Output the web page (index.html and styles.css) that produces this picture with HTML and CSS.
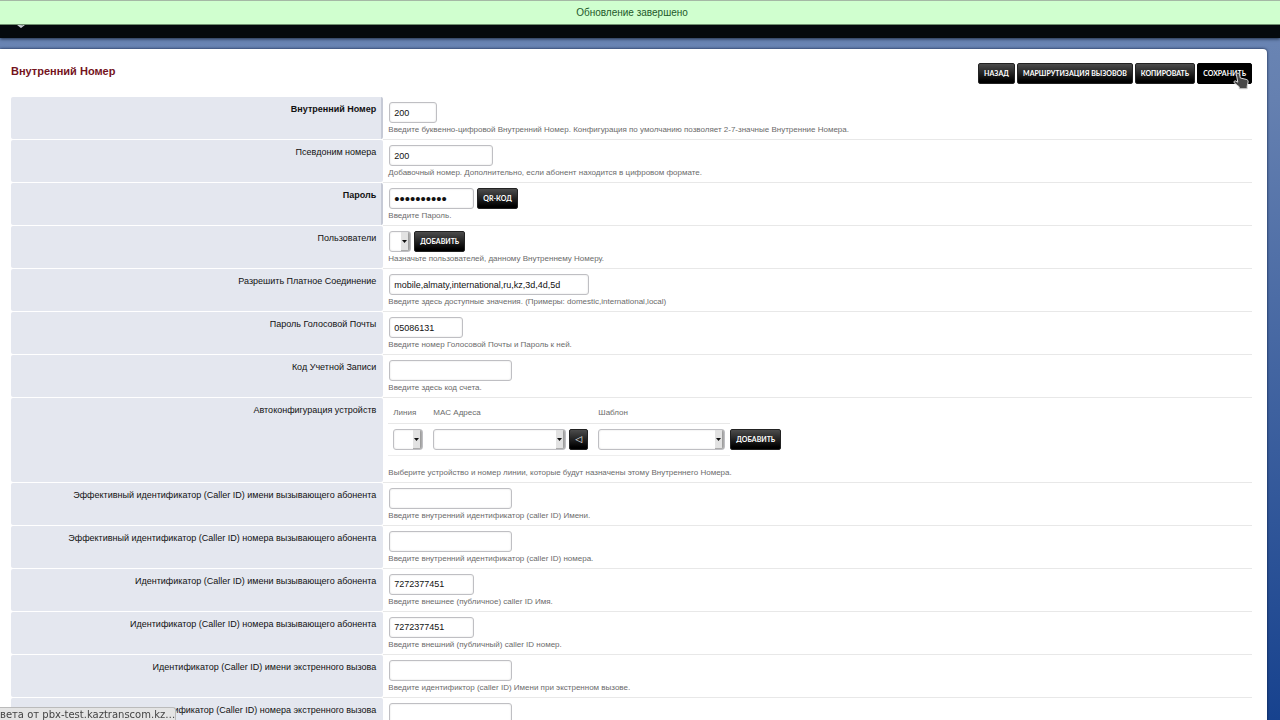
FILE: index.html
```
<!DOCTYPE html>
<html lang="ru">
<head>
    <meta charset="UTF-8">
    <meta name="viewport" content="width=device-width, initial-scale=1.0">
    <title>Внутренний Номер</title>
    <link rel="stylesheet" href="styles.css">
</head>
<body>
    <div class="message" role="status">Обновление завершено</div>

    <header class="menu-bar">
        <svg class="menu-logo" viewBox="0 0 10 10" width="10" height="10" aria-hidden="true">
            <path d="M1.500 6.500L5 9.200L8.500 6.500M4 5v3h2" fill="none" stroke="#c8ced4" stroke-width="1.4"/>
        </svg>
    </header>

    <main class="main-content">
        <form onsubmit="return false">
            <div class="action-bar">
                <h1>Внутренний Номер</h1>
                <div class="actions">
                    <button type="button" class="btn">Назад</button>
                    <button type="button" class="btn">Маршрутизация вызовов</button>
                    <button type="button" class="btn">Копировать</button>
                    <button type="submit" class="btn btn-hover">Сохранить
                        <svg class="pointer" viewBox="0 0 16 18" width="16" height="18" aria-hidden="true">
                            <path d="M3.4 2.4C3.6 0.8 6 0.6 6.500 2.200L7.300 6L13.2 7.4C14.6 7.7 15.3 8.600 15.1 10L14.2 14.2V16.8H6.2V14.8L1.200 10.800C0.400 9.600 1.600 8.400 2.800 9L4.800 10.200Z" fill="#484848" stroke="#d8d8d8" stroke-width="1"/>
                        </svg>
                    </button>
                </div>
            </div>

            <div class="row required">
                <label for="extension">Внутренний Номер</label>
                <div class="value">
                    <div class="controls"><input type="text" id="extension" class="w-number" value="200"></div>
                    <p>Введите буквенно-цифровой Внутренний Номер. Конфигурация по умолчанию позволяет 2-7-значные Внутренние Номера.</p>
                </div>
            </div>
            <div class="row">
                <label for="alias">Псевдоним номера</label>
                <div class="value">
                    <div class="controls"><input type="text" id="alias" class="w-alias" value="200"></div>
                    <p>Добавочный номер. Дополнительно, если абонент находится в цифровом формате.</p>
                </div>
            </div>
            <div class="row required">
                <label for="password">Пароль</label>
                <div class="value">
                    <div class="controls">
                        <input type="password" id="password" class="w-medium" value="aaaaaaaaaa">
                        <button type="button" class="btn">QR-код</button>
                    </div>
                    <p>Введите Пароль.</p>
                </div>
            </div>
            <div class="row">
                <label for="users">Пользователи</label>
                <div class="value">
                    <div class="controls">
                        <select id="users" class="w-user"><option></option></select>
                        <button type="button" class="btn">Добавить</button>
                    </div>
                    <p>Назначьте пользователей, данному Внутреннему Номеру.</p>
                </div>
            </div>
            <div class="row">
                <label for="toll">Разрешить Платное Соединение</label>
                <div class="value">
                    <div class="controls"><input type="text" id="toll" class="w-wide" value="mobile,almaty,international,ru,kz,3d,4d,5d"></div>
                    <p>Введите здесь доступные значения. (Примеры: domestic,international,local)</p>
                </div>
            </div>
            <div class="row">
                <label for="voicemail">Пароль Голосовой Почты</label>
                <div class="value">
                    <div class="controls"><input type="text" id="voicemail" class="w-voicemail" value="05086131"></div>
                    <p>Введите номер Голосовой Почты и Пароль к ней.</p>
                </div>
            </div>
            <div class="row">
                <label for="account">Код Учетной Записи</label>
                <div class="value">
                    <div class="controls"><input type="text" id="account"></div>
                    <p>Введите здесь код счета.</p>
                </div>
            </div>
            <div class="row">
                <label for="line">Автоконфигурация устройств</label>
                <div class="value">
                    <div class="devices">
                        <table>
                            <thead>
                                <tr>
                                    <th>Линия</th>
                                    <th>MAC Адреса</th>
                                    <th>Шаблон</th>
                                </tr>
                            </thead>
                            <tbody>
                                <tr>
                                    <td><select id="line" class="w-line"><option></option></select></td>
                                    <td>
                                        <div class="mac">
                                            <select class="w-mac" aria-label="MAC Адреса"><option></option></select>
                                            <button type="button" class="btn btn-icon">◁</button>
                                        </div>
                                    </td>
                                    <td><select class="w-template" aria-label="Шаблон"><option></option></select></td>
                                </tr>
                            </tbody>
                        </table>
                        <button type="button" class="btn">Добавить</button>
                    </div>
                    <p>Выберите устройство и номер линии, которые будут назначены этому Внутреннего Номера.</p>
                </div>
            </div>
            <div class="row">
                <label for="eff-name">Эффективный идентификатор (Caller ID) имени вызывающего абонента</label>
                <div class="value">
                    <div class="controls"><input type="text" id="eff-name"></div>
                    <p>Введите внутренний идентификатор (caller ID) Имени.</p>
                </div>
            </div>
            <div class="row">
                <label for="eff-number">Эффективный идентификатор (Caller ID) номера вызывающего абонента</label>
                <div class="value">
                    <div class="controls"><input type="text" id="eff-number"></div>
                    <p>Введите внутренний идентификатор (caller ID) номера.</p>
                </div>
            </div>
            <div class="row">
                <label for="out-name">Идентификатор (Caller ID) имени вызывающего абонента</label>
                <div class="value">
                    <div class="controls"><input type="text" id="out-name" class="w-medium" value="7272377451"></div>
                    <p>Введите внешнее (публичное) caller ID Имя.</p>
                </div>
            </div>
            <div class="row">
                <label for="out-number">Идентификатор (Caller ID) номера вызывающего абонента</label>
                <div class="value">
                    <div class="controls"><input type="text" id="out-number" class="w-medium" value="7272377451"></div>
                    <p>Введите внешний (публичный) caller ID номер.</p>
                </div>
            </div>
            <div class="row">
                <label for="em-name">Идентификатор (Caller ID) имени экстренного вызова</label>
                <div class="value">
                    <div class="controls"><input type="text" id="em-name"></div>
                    <p>Введите идентификтор (caller ID) Имени при экстренном вызове.</p>
                </div>
            </div>
            <div class="row">
                <label for="em-number">Идентификатор (Caller ID) номера экстренного вызова</label>
                <div class="value">
                    <div class="controls"><input type="text" id="em-number"></div>
                </div>
            </div>
        </form>
    </main>

    <div class="browser-status">вета от pbx-test.kaztranscom.kz…</div>
</body>
</html>
```
FILE: styles.css
```
* {
    margin: 0;
    padding: 0;
    box-sizing: border-box;
}

html {
    scrollbar-width: none;
}

body {
    font-family: "Liberation Sans", Arial, sans-serif;
    font-size: 9px;
    color: #111;
    min-height: 100vh;
    background: linear-gradient(to bottom, #6c87b5 0, #6580b0 100px, #17428e 720px) fixed;
}

.message {
    position: absolute;
    top: 0;
    left: 0;
    right: 0;
    z-index: 2;
    height: 25px;
    padding-right: 16px;
    border-top: 1px solid #a5b8a5;
    border-bottom: 1px solid #6f8f70;
    background: #d0ffcf;
    color: #23592a;
    font-size: 10px;
    line-height: 24px;
    text-align: center;
}

.menu-bar {
    height: 38px;
    padding: 18px 16px 0;
    background: #05090d;
    box-shadow: 0 1px 3px #1d2c46;
}

.menu-logo {
    display: block;
}

.main-content {
    margin: 11px 13px 0 0;
    padding: 14px 15px 15px 11px;
    background: #fff;
    border-radius: 0 4px 4px 0;
    box-shadow: 0 0 3px #0a1a3c;
}

.action-bar {
    display: flex;
    justify-content: space-between;
    height: 34px;
}

h1 {
    font-size: 11px;
    line-height: 17px;
    color: #74131d;
}

.actions {
    display: flex;
    gap: 2px;
}

.btn {
    position: relative;
    height: 21px;
    padding: 0 5px;
    border: 1px solid #222;
    border-radius: 2px;
    background: linear-gradient(to bottom, #4c4c4c, #000 90%);
    color: #fff;
    font-family: Lato, sans-serif;
    font-size: 7px;
    font-weight: bold;
    line-height: 19px;
    text-transform: uppercase;
    white-space: nowrap;
}

.btn-hover {
    background: #000;
    border-color: #000;
}

.pointer {
    position: absolute;
    right: 2px;
    bottom: -7px;
}

.btn-icon {
    width: 19px;
    padding: 0;
    font-family: "DejaVu Sans", sans-serif;
    font-size: 9px;
    font-weight: normal;
}

.row {
    display: grid;
    grid-template-columns: 30% 1fr;
    min-height: 43px;
}

.row > label {
    margin-bottom: 1px;
    padding: 6px 7px 0 0;
    border-radius: 2px;
    background: #e4e7ef;
    line-height: 12px;
    text-align: right;
}

.required > label {
    padding-right: 5px;
    border-right: 2px solid #c6cad6;
    font-weight: bold;
}

.value {
    padding: 5px 0 0 5px;
    border-bottom: 1px solid #e8e8e8;
}

.controls {
    display: flex;
    gap: 3px;
    padding-left: 1px;
}

.value p {
    color: #6b6b6b;
    font-size: 8px;
    line-height: 13px;
}

input,
select {
    width: 123px;
    height: 21px;
    padding: 0 4px;
    border: 1px solid #bfbfc3;
    border-radius: 3px;
    background: #fff;
    box-shadow: inset 0 0 2px #ddd;
    color: #111;
    font-family: inherit;
    font-size: 9px;
}

input[type="password"] {
    font-size: 15px;
}

select {
    appearance: none;
    background: url("data:image/svg+xml,%3Csvg xmlns='http://www.w3.org/2000/svg' width='9' height='19'%3E%3Cpath d='M0 0h9v19H0z' fill='%23e2e2e2'/%3E%3Cpath d='M7 0h2v19H0v-1h7z' fill='%239a9a9a'/%3E%3Cpath d='M1 8h5L3.500 11z' fill='%23111'/%3E%3C/svg%3E") right top no-repeat #fff;
}

.w-number { width: 48px; }
.w-alias { width: 104px; }
.w-medium { width: 85px; }
.w-wide { width: 200px; }
.w-voicemail { width: 74px; }
.w-user { width: 22px; }
.w-line { width: 30px; }
.w-mac { width: 133px; }
.w-template { width: 127px; }

.devices {
    display: flex;
    align-items: flex-end;
    padding-bottom: 10px;
}

.devices > .btn {
    margin-bottom: 6px;
}

.devices + p {
    padding-bottom: 3px;
}

table {
    border-collapse: collapse;
}

th {
    height: 20px;
    padding: 0 5px;
    border-bottom: 1px solid #e8e8e8;
    color: #6b6b6b;
    font-size: 8px;
    font-weight: normal;
    text-align: left;
}

td {
    height: 32px;
    padding: 0 5px;
    border-bottom: 1px solid #eee;
}

td select {
    display: block;
}

.mac {
    display: flex;
    gap: 3px;
}

.browser-status {
    position: fixed;
    left: 0;
    bottom: 0;
    height: 13px;
    border: 1px solid #bbb;
    border-width: 1px 1px 0 0;
    border-radius: 0 3px 0 0;
    background: #e4e4e4;
    color: #444;
    font-family: "DejaVu Sans", sans-serif;
    font-size: 10px;
    line-height: 14px;
}
```
